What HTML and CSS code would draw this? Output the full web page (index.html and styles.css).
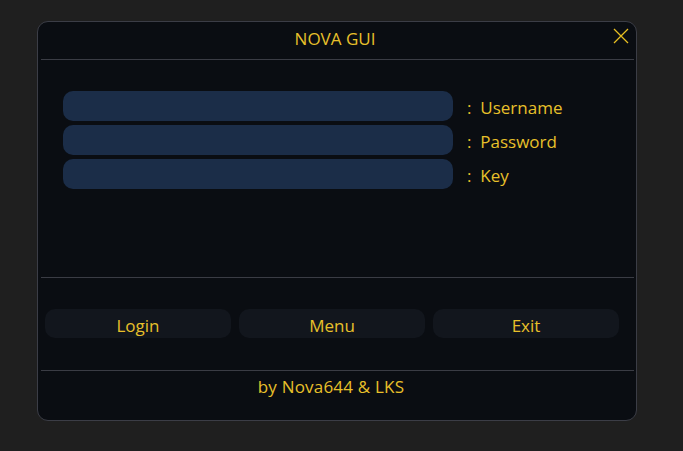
FILE: index.html
```html
<!DOCTYPE html>
<html>
<head>
<meta charset="utf-8">
<link rel="stylesheet" href="styles.css">
</head>
<body>
<div class="window">
  <div class="titlebar">
    <span class="title">NOVA GUI</span>
    <svg class="close" width="16" height="16" viewBox="0 0 16 16"><path d="M1 1L15 15M15 1L1 15" stroke="#e8bf22" stroke-width="1.3" fill="none"/></svg>
  </div>
  <div class="divider"></div>
  <div class="form">
    <div class="row"><div class="input"></div><span class="label">:&nbsp; Username</span></div>
    <div class="row"><div class="input"></div><span class="label">:&nbsp; Password</span></div>
    <div class="row"><div class="input"></div><span class="label">:&nbsp; Key</span></div>
  </div>
  <div class="divider"></div>
  <div class="buttons">
    <div class="btn">Login</div>
    <div class="btn">Menu</div>
    <div class="btn">Exit</div>
  </div>
  <div class="divider"></div>
  <div class="footer">by Nova644 &amp; LKS</div>
</div>
</body>
</html>
```
FILE: styles.css
```css
html, body { margin: 0; padding: 0; }
body {
  background: #1f1f1f;
  width: 683px;
  height: 451px;
  font-family: "Open Sans", "Noto Sans", sans-serif;
  color: #e8c02a;
  padding-top: 21px;
  padding-left: 37px;
  box-sizing: border-box;
}
.window {
  width: 600px;
  height: 400px;
  box-sizing: border-box;
  border: 1px solid #3b3d46;
  border-radius: 11px;
  background: #0a0d12;
  display: flex;
  flex-direction: column;
}
.titlebar {
  height: 37px;
  position: relative;
  display: flex;
  align-items: center;
  justify-content: center;
  padding-bottom: 4px;
  padding-right: 4px;
  box-sizing: border-box;
}
.title { font-size: 17px; }
.close { position: absolute; right: 7px; top: 6px; }
.divider {
  height: 1px;
  background: #3a3c44;
  margin: 0 2px 0 3px;
}
.form {
  height: 217px;
  box-sizing: border-box;
  padding: 31px 0 0 25px;
  display: flex;
  flex-direction: column;
  gap: 4px;
}
.row { display: flex; align-items: center; height: 30px; }
.input {
  width: 390px;
  height: 30px;
  border-radius: 10px;
  background: #1b2d48;
}
.label { margin-left: 14px; font-size: 17px; padding-top: 3px; }
.buttons {
  height: 92px;
  box-sizing: border-box;
  padding: 31px 0 0 7px;
  display: flex;
  gap: 8px;
}
.btn {
  width: 186px;
  height: 29px;
  border-radius: 10px;
  background: #12161d;
  display: flex;
  align-items: center;
  justify-content: center;
  font-size: 17px;
  padding-top: 3px;
  box-sizing: border-box;
}
.footer {
  flex: 1;
  text-align: center;
  font-size: 17px;
  padding-top: 4px;
  padding-right: 12px;
  letter-spacing: 0.2px;
}
```
